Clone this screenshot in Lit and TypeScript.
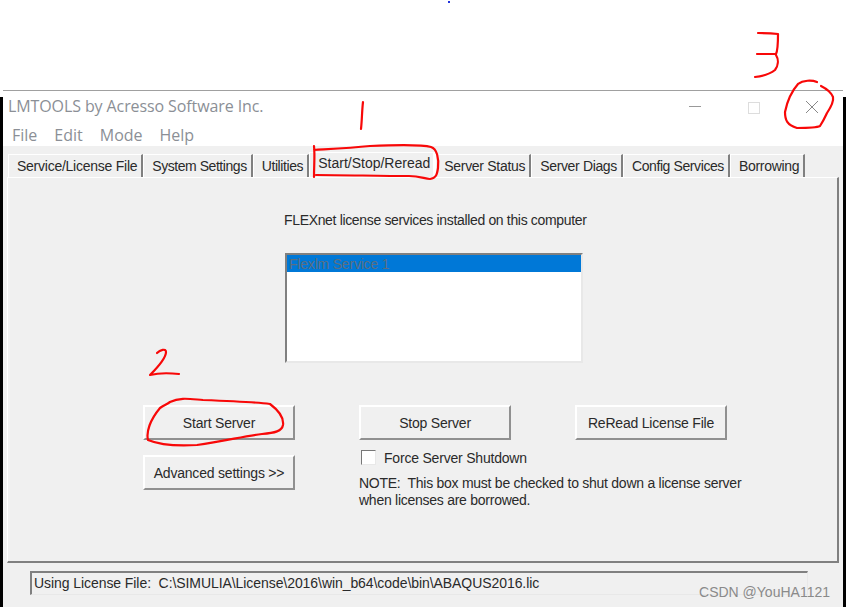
import { LitElement, html, css, svg } from "lit";
import { customElement } from "lit/decorators.js";

const TABS: [string, number][] = [
  ["Service/License File", -0.25],
  ["System Settings", -0.45],
  ["Utilities", -0.4],
  ["Start/Stop/Reread", 0],
  ["Server Status", -0.3],
  ["Server Diags", -0.35],
  ["Config Services", -0.4],
  ["Borrowing", -0.3],
];

@customElement("app-root")
export class AppRoot extends LitElement {
  static styles = css`
    :host { display: block; position: relative; width: 846px; height: 607px; overflow: hidden; background: #fff; font-family: "Liberation Sans", Arial, sans-serif; font-size: 14px; letter-spacing: -0.2px; color: #2a2a2a; }
    .top { height: 90px; }
    .dot { position: absolute; left: 448px; top: 1px; width: 2px; height: 2px; background: #2233dd; }
    .desk { display: flex; height: 517px; }
    .edge { width: 3px; margin-top: 7px; background: #000; flex: none; }
    .win { width: 840px; flex: none; border-top: 1px solid #a0a0a0; background: #f0f0f0; display: flex; flex-direction: column; }
    .head { background: #fff; height: 55px; display: flex; flex-direction: column; flex: none; }
    .title { height: 31px; display: flex; align-items: center; padding-left: 5px; font-family: "Open Sans", sans-serif; font-size: 16px; letter-spacing: -0.1px; color: #8b8f96; }
    .title-text { margin-top: -2px; }
    .caption { margin-left: auto; display: flex; align-self: stretch; }
    .menu { display: flex; gap: 17px; padding-left: 9px; margin-top: 2px; font-family: "Open Sans", sans-serif; font-size: 16px; letter-spacing: 0; color: #8b8f96; }
    .tabs { display: flex; height: 31px; padding: 8px 0 0 5px; box-sizing: border-box; flex: none; align-items: flex-end; }
    .tab { height: 23px; padding: 0 4px 1px 8px; display: flex; align-items: center; border-top: 1px solid #fff; border-left: 1px solid #fff; border-right: 2px solid #808080; box-sizing: border-box; white-space: nowrap; }
    .tab.on { height: 25px; border-right-color: #fff; padding: 0 3px 5px 8px; }
    .panel { margin: 0 4px 0 4px; height: 386px; box-sizing: border-box; border-top: 1px solid #fff; border-left: 1px solid #fff; border-right: 2px solid #808080; border-bottom: 2px solid #808080; display: flex; flex-direction: column; }
    .label { margin: 34px 0 0 276px; height: 17px; line-height: 17px; letter-spacing: -0.34px; }
    .list { margin: 24px 0 0 277px; width: 298px; height: 110px; box-sizing: border-box; background: #fff; border-top: 2px solid #808080; border-left: 2px solid #808080; border-right: 2px solid #e8e8e8; border-bottom: 2px solid #e8e8e8; }
    .sel { height: 17px; box-sizing: border-box; padding: 1px 0 0 2px; line-height: 16px; background: #0078d7; color: #5c6f80; }
    .grid { margin: 42px 0 0 135px; display: grid; grid-template-columns: 152px 152px 152px; column-gap: 64px; row-gap: 15px; }
    button { font: inherit; letter-spacing: inherit; color: inherit; height: 35px; padding: 0; background: #f0f0f0; border: 0; border-top: 2px solid #fff; border-left: 2px solid #fff; border-right: 2px solid #909090; border-bottom: 2px solid #909090; box-sizing: border-box; }
    .opts { display: flex; flex-direction: column; grid-column: 2 / span 2; }
    .check { display: flex; align-items: center; gap: 8px; height: 17px; margin-left: 2px; margin-top: -6px; }
    .box { width: 15px; height: 15px; box-sizing: border-box; background: #fff; border: 1px solid #777; border-right-color: #e8e8e8; border-bottom-color: #e8e8e8; }
    .note { margin-top: 9px; line-height: 17px; white-space: nowrap; letter-spacing: -0.26px; }
    .status { margin: 8px 0 0 27px; width: 778px; height: 24px; box-sizing: border-box; border-top: 2px solid #808080; border-left: 2px solid #808080; border-right: 1px solid #e8e8e8; border-bottom: 1px solid #e8e8e8; padding-left: 2px; line-height: 20px; white-space: nowrap; letter-spacing: -0.07px; }
    .mark { position: absolute; right: 16px; bottom: 7px; font-size: 14px; letter-spacing: 0; color: #8a8a8a; }
    .ink { position: absolute; left: 0; top: 0; pointer-events: none; }
  `;

  render() {
    return html`
      <div class="dot"></div>
      <div class="top"></div>
      <div class="desk">
        <div class="edge"></div>
        <div class="win">
          <div class="head">
            <div class="title"><span class="title-text">LMTOOLS by Acresso Software Inc.</span>
              <div class="caption">
                <svg width="154" height="31" viewBox="0 0 154 31">
                  <path d="M0 15.5H12" stroke="#999" fill="none"/>
                  <rect x="59.5" y="11.5" width="11" height="11" fill="none" stroke="#ddd"/>
                  <path d="M117 10L129 22M129 10L117 22" stroke="#888" fill="none"/>
                </svg>
              </div>
            </div>
            <div class="menu"><span>File</span><span>Edit</span><span>Mode</span><span>Help</span></div>
          </div>
          <div class="tabs">
            ${TABS.map(([t, ls]) => html`<div class="tab ${t.startsWith("Start") ? "on" : ""}" style="letter-spacing:${ls}px">${t}</div>`)}
          </div>
          <div class="panel">
            <div class="label">FLEXnet license services installed on this computer</div>
            <div class="list"><div class="sel">Flexlm Service 1</div></div>
            <div class="grid">
              <button>Start Server</button>
              <button>Stop Server</button>
              <button>ReRead License File</button>
              <button>Advanced settings &gt;&gt;</button>
              <div class="opts">
                <div class="check"><span class="box"></span>Force Server Shutdown</div>
                <div class="note">NOTE:&nbsp; This box must be checked to shut down a license server<br>when licenses are borrowed.</div>
              </div>
            </div>
          </div>
          <div class="status">Using License File:&nbsp; C:\\SIMULIA\\License\\2016\\win_b64\\code\\bin\\ABAQUS2016.lic</div>
        </div>
        <div class="edge"></div>
      </div>
      <div class="mark">CSDN @YouHA1121</div>
      <svg class="ink" width="846" height="607" viewBox="0 0 846 607" fill="none" stroke="#f80808" stroke-width="2.2" stroke-linecap="round" stroke-linejoin="round">
        ${svg`
          <path d="M363 102C362 110 362 120 361 129"/>
          <path d="M758 33C763 33 770 33 778 34C778 42 778 50 776 54C768 54 762 54 757 54M776 55C779 60 778 66 775 70C770 74 764 76 755 77"/>
          <path d="M798 84C791 92 787 102 785 112C785 120 787 125 797 128C806 128 816 128 820 126C824 120 826 115 827 113C831 107 834 102 833 97C831 92 825 88 821 86M798 84C803 80 812 80 817 82"/>
          <path d="M157 353C160 350 166 348 166 352C166 358 158 367 150 375C158 373 170 373 179 374"/>
          <path d="M314 150C330 149 350 148 370 146C395 145 420 144 431 147C437 149 439 158 438 168C437 175 436 178 430 179C425 179 420 176 409 176C380 176 345 175 316 175M314 146C315 155 314 165 314 177"/>
          <path d="M170 402C180 397 190 399 203 400C230 401 255 402 270 404C278 410 284 418 283 425C282 431 275 433 262 434C245 436 225 441 197 445C180 446 160 445 148 440C146 432 150 420 160 408C164 405 166 405 170 402Z"/>
        `}
      </svg>
    `;
  }
}
